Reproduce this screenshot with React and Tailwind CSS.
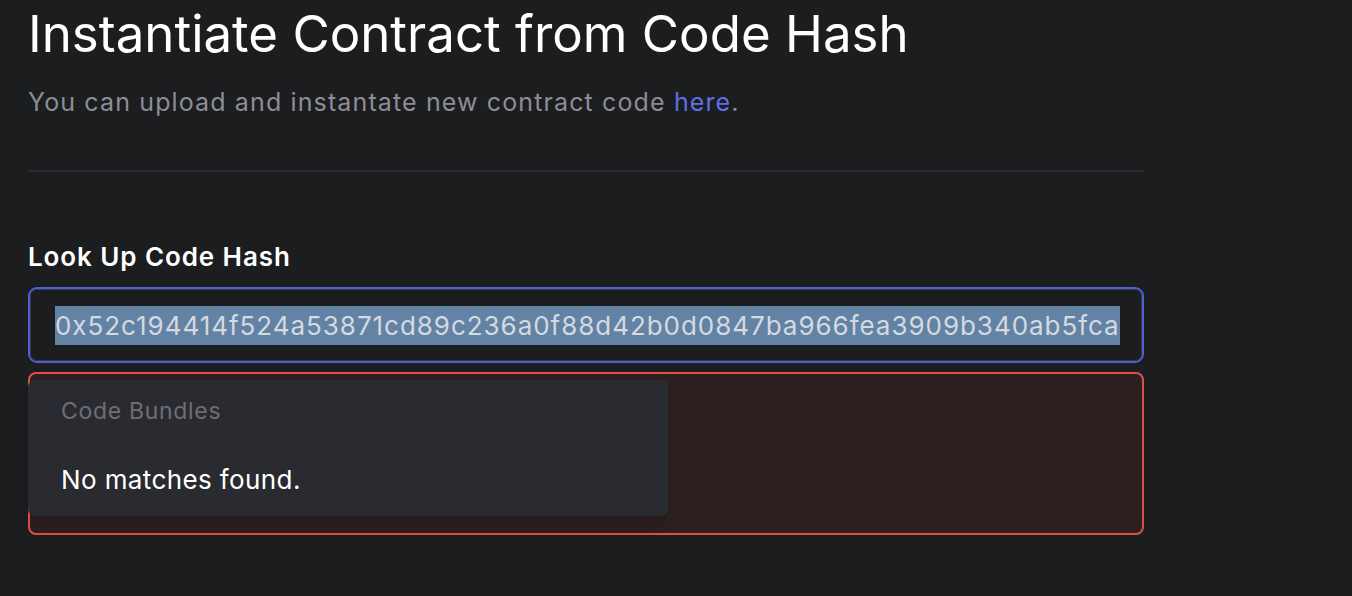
export default function App() {
  const hash = '0x52c194414f524a53871cd89c236a0f88d42b0d0847ba966fea3909b340ab5fca';

  return (
    <div className="min-h-screen bg-[#1c1d1f] font-['Inter',sans-serif] text-white">
      <div className="w-[1116px] ml-[28px] pt-[6px]">
        {/* Header */}
        <h1 className="text-[51px] leading-[56px] font-normal text-white">
          Instantiate Contract from Code Hash
        </h1>
        <p className="mt-[25px] text-[25px] leading-[30px] tracking-[0.045em] text-[#8c8d96]">
          You can upload and instantate new contract code{' '}
          <a className="text-[#5f6fe3]">here</a>.
        </p>
        <div className="mt-[53px] h-[2px] bg-[#2b2c30]" />

        {/* Lookup */}
        <label className="block mt-[70px] text-[26px] leading-[30px] tracking-[0.035em] font-semibold text-white">
          Look Up Code Hash
        </label>
        <div className="mt-[15px] h-[76px] rounded-[9px] border-2 border-[#4d5fde] flex items-center">
          <div className="h-full w-full rounded-[7px] border border-[#38393e] flex items-center pl-[24px]">
            <span className="bg-[#6383a5] text-[#d5d9e0] text-[26px] leading-[39px] tracking-[0.037em]">
              {hash}
            </span>
          </div>
        </div>

        {/* Error box with dropdown */}
        <div className="mt-[9px] h-[163px] rounded-[8px] border-2 border-[#db5049] bg-[#2d1f20] pt-[6px]">
          <div className="-ml-[2px] w-[640px] h-[136px] rounded-[7px] bg-[#2a2b30] shadow-lg pl-[33px] pt-[19px]">
            <div className="text-[23px] leading-[24px] tracking-[0.03em] text-[#6d6e76]">Code Bundles</div>
            <div className="mt-[42px] text-[26px] leading-[30px] tracking-[0.015em] text-white">No matches found.</div>
          </div>
        </div>
      </div>
    </div>
  );
}
